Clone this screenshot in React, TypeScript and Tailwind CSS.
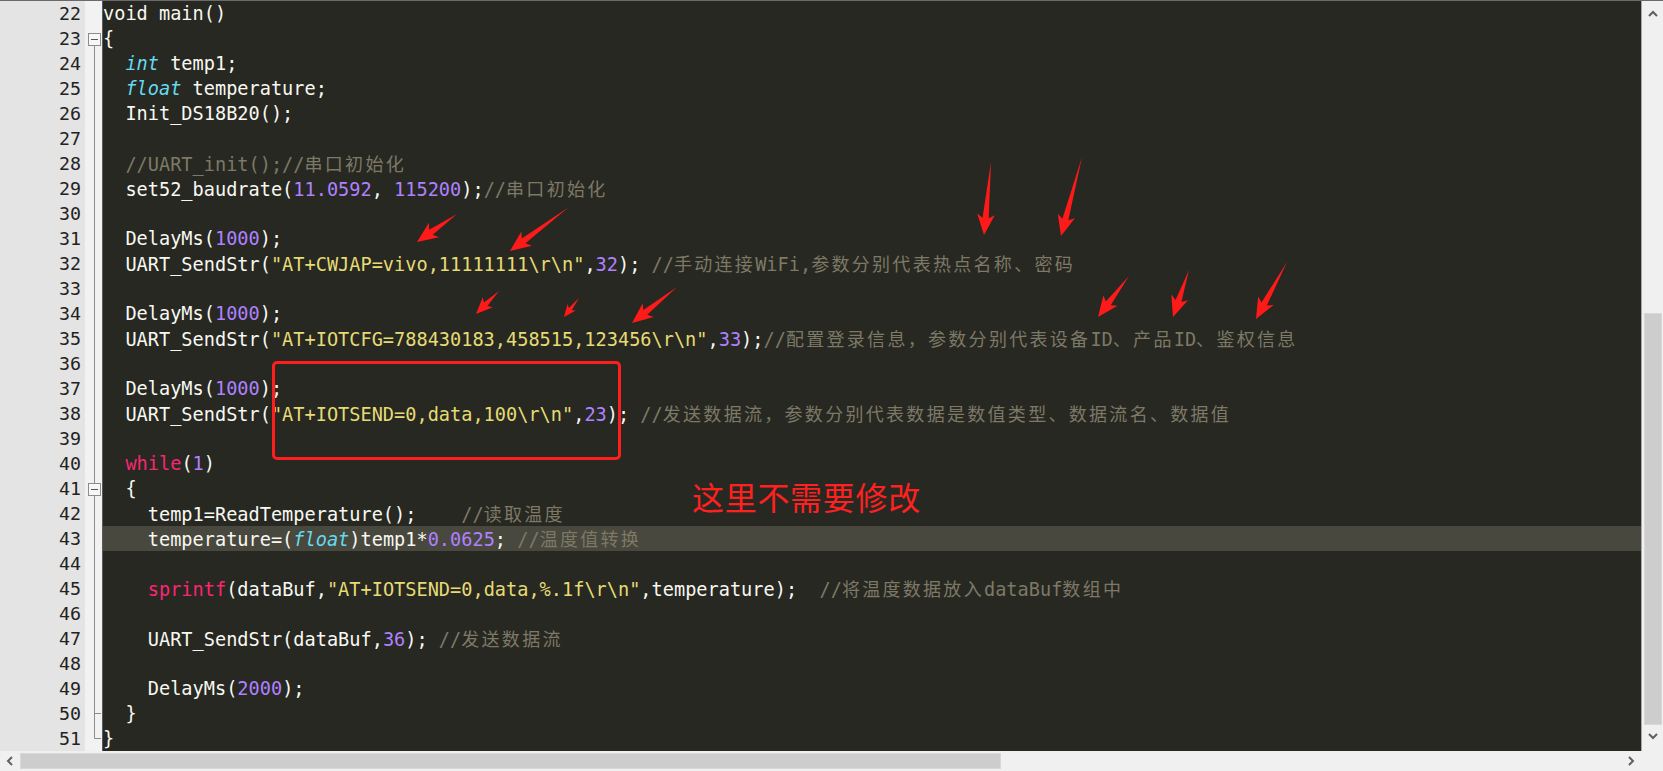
type Tok = [string, string]

const tone: Record<string, string> = {
  p: '',
  k: 'italic text-[#66d9ef]',
  n: 'text-[#ae81ff]',
  s: 'text-[#e6db74]',
  c: 'text-[#7d7966]',
  r: 'text-[#f92672]',
}

const lines: Tok[][] = [
  [['void main()', 'p']],
  [['{', 'p']],
  [['  ', 'p'], ['int', 'k'], [' temp1;', 'p']],
  [['  ', 'p'], ['float', 'k'], [' temperature;', 'p']],
  [['  Init_DS18B20();', 'p']],
  [],
  [['  ', 'p'], ['//UART_init();//串口初始化', 'c']],
  [['  set52_baudrate(', 'p'], ['11.0592', 'n'], [', ', 'p'], ['115200', 'n'], [');', 'p'], ['//串口初始化', 'c']],
  [],
  [['  DelayMs(', 'p'], ['1000', 'n'], [');', 'p']],
  [['  UART_SendStr(', 'p'], ['"AT+CWJAP=vivo,11111111\\r\\n"', 's'], [',', 'p'], ['32', 'n'], ['); ', 'p'], ['//手动连接WiFi,参数分别代表热点名称、密码', 'c']],
  [],
  [['  DelayMs(', 'p'], ['1000', 'n'], [');', 'p']],
  [['  UART_SendStr(', 'p'], ['"AT+IOTCFG=788430183,458515,123456\\r\\n"', 's'], [',', 'p'], ['33', 'n'], [');', 'p'], ['//配置登录信息，参数分别代表设备ID、产品ID、鉴权信息', 'c']],
  [],
  [['  DelayMs(', 'p'], ['1000', 'n'], [');', 'p']],
  [['  UART_SendStr(', 'p'], ['"AT+IOTSEND=0,data,100\\r\\n"', 's'], [',', 'p'], ['23', 'n'], ['); ', 'p'], ['//发送数据流，参数分别代表数据是数值类型、数据流名、数据值', 'c']],
  [],
  [['  ', 'p'], ['while', 'r'], ['(', 'p'], ['1', 'n'], [')', 'p']],
  [['  {', 'p']],
  [['    temp1=ReadTemperature();    ', 'p'], ['//读取温度', 'c']],
  [['    temperature=(', 'p'], ['float', 'k'], [')temp1*', 'p'], ['0.0625', 'n'], ['; ', 'p'], ['//温度值转换', 'c']],
  [],
  [['    ', 'p'], ['sprintf', 'r'], ['(dataBuf,', 'p'], ['"AT+IOTSEND=0,data,%.1f\\r\\n"', 's'], [',temperature);  ', 'p'], ['//将温度数据放入dataBuf数组中', 'c']],
  [],
  [['    UART_SendStr(dataBuf,', 'p'], ['36', 'n'], ['); ', 'p'], ['//发送数据流', 'c']],
  [],
  [['    DelayMs(', 'p'], ['2000', 'n'], [');', 'p']],
  [['  }', 'p']],
  [['}', 'p']],
]

const CJK = /([\u3000-\u303f\u4e00-\u9fff\uff00-\uffef]+)/

function withCjk(text: string) {
  return text.split(CJK).map((part, i) =>
    i % 2 === 1 ? (
      <span key={i} className="font-['Noto_Sans_CJK_SC',sans-serif] text-[18px] tracking-[2.3px]">
        {part}
      </span>
    ) : (
      part
    ),
  )
}

function Fold({ kind }: { kind: string }) {
  const stroke = '#8c8c8c'
  return (
    <svg width="17" height="25" className="block">
      {kind === 'open' && <line x1="9.5" y1="18.5" x2="9.5" y2="25" stroke={stroke} />}
      {kind === 'open2' && <line x1="9.5" y1="0" x2="9.5" y2="25" stroke={stroke} />}
      {(kind === 'open' || kind === 'open2') && (
        <>
          <rect x="3.5" y="7.5" width="12" height="12" fill="#f7f7f7" stroke={stroke} />
          <line x1="6" y1="13.5" x2="13" y2="13.5" stroke="#555" />
        </>
      )}
      {kind === 'mid' && <line x1="9.5" y1="0" x2="9.5" y2="25" stroke={stroke} />}
      {kind === 'tee' && (
        <>
          <line x1="9.5" y1="0" x2="9.5" y2="25" stroke={stroke} />
          <line x1="9.5" y1="12.5" x2="16" y2="12.5" stroke={stroke} />
        </>
      )}
      {kind === 'end' && (
        <>
          <line x1="9.5" y1="0" x2="9.5" y2="12.5" stroke={stroke} />
          <line x1="9.5" y1="12.5" x2="16" y2="12.5" stroke={stroke} />
        </>
      )}
    </svg>
  )
}

function foldKind(n: number) {
  if (n === 23) return 'open'
  if (n === 41) return 'open2'
  if (n === 50) return 'tee'
  if (n === 51) return 'end'
  if (n > 23 && n < 51) return 'mid'
  return ''
}

const arrows: [number, number, number, number][] = [
  [457, 214, 417, 242],
  [569, 207, 510, 251],
  [991, 162, 984, 235],
  [1082, 157, 1061, 236],
  [499, 291, 476, 314],
  [579, 298, 564, 317],
  [677, 287, 632, 323],
  [1129, 276, 1098, 317],
  [1189, 270, 1173, 317],
  [1287, 262, 1256, 319],
]

function arrowPoints([x1, y1, x2, y2]: [number, number, number, number]) {
  const dx = x2 - x1
  const dy = y2 - y1
  const len = Math.hypot(dx, dy)
  const ux = dx / len
  const uy = dy / len
  const nx = -uy
  const ny = ux
  const hl = Math.min(17, len * 0.42)
  const hw = hl * 0.52
  const sw = hl * 0.18
  const bx = x2 - ux * hl
  const by = y2 - uy * hl
  const back = hl * 0.22
  const pts = [
    [x1, y1],
    [bx + nx * sw, by + ny * sw],
    [bx - ux * back + nx * hw, by - uy * back + ny * hw],
    [x2, y2],
    [bx - ux * back - nx * hw, by - uy * back - ny * hw],
    [bx - nx * sw, by - ny * sw],
  ]
  return pts.map((p) => p.join(',')).join(' ')
}

export default function App() {
  return (
    <div className="relative flex h-[771px] w-[1663px] flex-col overflow-hidden bg-[#f0f0f0] font-['DejaVu_Sans_Mono','Noto_Sans_CJK_SC',monospace] text-[18.6px]">
      <div className="flex h-[751px] border-t border-[#6a6a6a]">
        <div className="w-[85px] bg-[#e4e4e4] pr-[4px] text-right text-[18.3px] text-[#222]">
          {lines.map((_, i) => (
            <div key={i} className="h-[25px] leading-[25px]">
              {22 + i}
            </div>
          ))}
        </div>
        <div className="w-[17px] bg-[#f2f2f2]">
          {lines.map((_, i) => (
            <Fold key={i} kind={foldKind(22 + i)} />
          ))}
        </div>
        <div className="w-px bg-[#5a5a5a]" />
        <div className="flex-1 bg-[#272822] text-[#f8f8f2]">
          {lines.map((toks, i) => (
            <div
              key={i}
              className={`h-[25px] whitespace-pre leading-[25px] ${22 + i === 43 ? 'bg-[#49483e]' : ''}`}
            >
              {toks.map(([t, k], j) => (
                <span key={j} className={tone[k]}>
                  {withCjk(t)}
                </span>
              ))}
            </div>
          ))}
        </div>
        <div className="w-px bg-[#a8a8a8]" />
        <div className="flex w-[21px] flex-col items-center bg-[#f0f0f0]">
          <svg width="12" height="26" className="block">
            <path d="M2 15 L6 11 L10 15" fill="none" stroke="#606060" strokeWidth="2" />
          </svg>
          <div className="mt-[286px] h-[416px] w-[18px] border border-[#d8d8d8] bg-[#cdcdcd]" />
          <svg width="12" height="22" className="mt-auto mb-[4px] block">
            <path d="M2 9 L6 13 L10 9" fill="none" stroke="#606060" strokeWidth="2" />
          </svg>
        </div>
      </div>
      <div className="flex h-[20px] items-center bg-[#f0f0f0]">
        <svg width="20" height="20" className="block">
          <path d="M12 6 L8 10 L12 14" fill="none" stroke="#606060" strokeWidth="2" />
        </svg>
        <div className="h-[16px] w-[981px] border border-[#d8d8d8] bg-[#cdcdcd]" />
        <div className="flex-1" />
        <svg width="20" height="20" className="mr-[22px] block">
          <path d="M8 6 L12 10 L8 14" fill="none" stroke="#606060" strokeWidth="2" />
        </svg>
      </div>

      <div className="pointer-events-none absolute left-[272px] top-[361px] h-[99px] w-[349px] rounded-[5px] border-[3px] border-[#ff1e1e]" />
      <div className="pointer-events-none absolute left-[692px] top-[474px] font-['Noto_Sans_CJK_SC',sans-serif] text-[32px] leading-[44px] tracking-[0.7px] text-[#ff2020]">
        这里不需要修改
      </div>
      <svg width="1663" height="771" className="pointer-events-none absolute left-0 top-0">
        {arrows.map((a, i) => (
          <polygon key={i} points={arrowPoints(a)} fill="#ff1a1a" />
        ))}
      </svg>
    </div>
  )
}
